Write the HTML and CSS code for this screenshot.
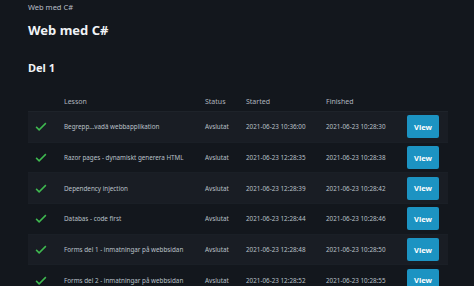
FILE: index.html
```html
<!DOCTYPE html>
<html lang="en">
<head>
    <meta charset="UTF-8">
    <title>Web med C#</title>
    <link rel="stylesheet" href="styles.css">
</head>
<body>

    <div class="crumb">Web med C#</div>
    <h1>Web med C#</h1>
    <h2>Del 1</h2>

    <!-- Lessons of the part -->
    <table class="lessons">
        <thead>
            <tr>
                <th class="col-check"></th>
                <th class="col-lesson">Lesson</th>
                <th class="col-status">Status</th>
                <th class="col-date">Started</th>
                <th class="col-date">Finished</th>
                <th class="col-action"></th>
            </tr>
        </thead>
        <tbody>
            <tr>
                <td><svg class="check" viewBox="0 0 16 12"><path d="M1.5 6.5l4 4 9-9"/></svg></td>
                <td>Begrepp...vad&auml; webbapplikation</td>
                <td>Avslutat</td>
                <td>2021-06-23 10:36:00</td>
                <td>2021-06-23 10:28:30</td>
                <td><a class="button">View</a></td>
            </tr>
            <tr>
                <td><svg class="check" viewBox="0 0 16 12"><path d="M1.5 6.5l4 4 9-9"/></svg></td>
                <td>Razor pages - dynamiskt generera HTML</td>
                <td>Avslutat</td>
                <td>2021-06-23 12:28:35</td>
                <td>2021-06-23 10:28:38</td>
                <td><a class="button">View</a></td>
            </tr>
            <tr>
                <td><svg class="check" viewBox="0 0 16 12"><path d="M1.5 6.5l4 4 9-9"/></svg></td>
                <td>Dependency injection</td>
                <td>Avslutat</td>
                <td>2021-06-23 12:28:39</td>
                <td>2021-06-23 10:28:42</td>
                <td><a class="button">View</a></td>
            </tr>
            <tr>
                <td><svg class="check" viewBox="0 0 16 12"><path d="M1.5 6.5l4 4 9-9"/></svg></td>
                <td>Databas - code first</td>
                <td>Avslutat</td>
                <td>2021-06-23 12:28:44</td>
                <td>2021-06-23 10:28:46</td>
                <td><a class="button">View</a></td>
            </tr>
            <tr>
                <td><svg class="check" viewBox="0 0 16 12"><path d="M1.5 6.5l4 4 9-9"/></svg></td>
                <td>Forms del 1 - inmatningar p&aring; webbsidan</td>
                <td>Avslutat</td>
                <td>2021-06-23 12:28:48</td>
                <td>2021-06-23 10:28:50</td>
                <td><a class="button">View</a></td>
            </tr>
            <tr>
                <td><svg class="check" viewBox="0 0 16 12"><path d="M1.5 6.5l4 4 9-9"/></svg></td>
                <td>Forms del 2 - inmatningar p&aring; webbsidan</td>
                <td>Avslutat</td>
                <td>2021-06-23 12:28:52</td>
                <td>2021-06-23 10:28:55</td>
                <td><a class="button">View</a></td>
            </tr>
        </tbody>
    </table>

</body>
</html>
```

FILE: styles.css
```css
body {
    font-family: "Noto Sans", "Open Sans", sans-serif;
    margin: 0;
    padding: 0 28px;
    background-color: #13171d;
    color: #c9d1d9;
    overflow: hidden;
}
.crumb {
    font-size: 7.5px;
    line-height: 14px;
    color: #b8bec6;
}
h1 {
    margin: 6px 0 0;
    font-size: 13px;
    line-height: 20px;
    color: #f0f3f6;
}
h2 {
    margin: 20px 0 0;
    font-size: 11px;
    line-height: 16px;
    color: #f0f3f6;
}

/* Lessons table */
.lessons {
    margin-top: 15px;
    width: 420px;
    border-collapse: collapse;
    font-size: 6.3px;
    color: #b9c0c8;
}
.lessons th {
    height: 20px;
    padding: 0;
    font-weight: normal;
    font-size: 7px;
    text-align: left;
    color: #aeb5bd;
    border-bottom: 1px solid #1e232a;
}
.lessons td {
    height: 29.7px;
    padding: 0;
    border-bottom: 1px solid #1a1f26;
}
.lessons tbody tr:nth-child(odd) {
    background-color: #191d24;
}
.col-check { width: 36px; }
.col-lesson { width: 141px; }
.col-status { width: 41px; }
.col-date { width: 80px; }
.check {
    display: block;
    width: 12px;
    height: 9px;
    margin-left: 7px;
    fill: none;
    stroke: #3fb950;
    stroke-width: 2;
}
.button {
    display: flex;
    align-items: center;
    justify-content: center;
    width: 32px;
    height: 23px;
    margin-left: 1px;
    background-color: #1c93c2;
    color: #fff;
    font-size: 7.5px;
    font-weight: bold;
    border-radius: 2px;
}
```
